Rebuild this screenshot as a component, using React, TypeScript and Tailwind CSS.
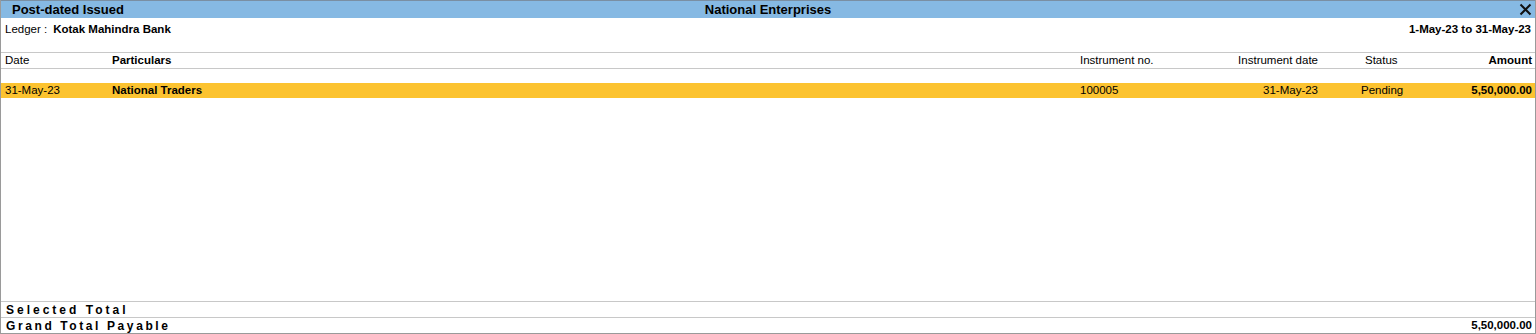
import React from "react";

export default function App() {
  return (
    <div
      className="w-[1536px] h-[334px] bg-white flex flex-col border-l border-r border-b border-[#9a9a9a] text-[11.5px] text-black overflow-hidden"
      style={{ fontFamily: '"Liberation Sans", Arial, sans-serif' }}
    >
      {/* Title bar */}
      <div className="h-[18px] bg-[#86b9e3] border-t border-[#7a8fa3] flex items-center relative shrink-0">
        <div className="pl-[11px] font-bold text-[13px] leading-none w-[300px]">Post-dated Issued</div>
        <div className="flex-1 text-center font-bold text-[13px] leading-none">National Enterprises</div>
        <div className="w-[300px] flex justify-end pr-[3px]">
          <svg width="13" height="13" viewBox="0 0 13 13">
            <path d="M1.5 1.5 L11.5 11.5 M11.5 1.5 L1.5 11.5" stroke="#111" strokeWidth="2" />
          </svg>
        </div>
      </div>
      {/* Ledger row */}
      <div className="h-[26px] flex items-center justify-between px-[4px] shrink-0 pb-[2px]">
        <div className="flex items-center">
          <span>Ledger :</span>
          <span className="font-bold ml-[6px]">Kotak Mahindra Bank</span>
        </div>
        <span className="font-bold">1-May-23 to 31-May-23</span>
      </div>
      <div className="h-[8px] shrink-0" />
      {/* Header */}
      <div className="h-[17px] border-t border-b border-[#c8c8c8] flex items-center shrink-0">
        <div className="w-[111px] pl-[4px]">Date</div>
        <div className="flex-1 font-bold">Particulars</div>
        <div className="w-[130px]">Instrument no.</div>
        <div className="w-[108px] text-right">Instrument date</div>
        <div className="w-[88px] pl-[47px]">Status</div>
        <div className="w-[129px] text-right pr-[3px] font-bold">Amount</div>
      </div>
      <div className="h-[14px] shrink-0" />
      {/* Selected row */}
      <div className="h-[15px] bg-[#fcc330] flex items-center shrink-0">
        <div className="w-[111px] pl-[4px]">31-May-23</div>
        <div className="flex-1 font-bold">National Traders</div>
        <div className="w-[130px]">100005</div>
        <div className="w-[108px] text-right">31-May-23</div>
        <div className="w-[88px] pl-[43px]">Pending</div>
        <div className="w-[129px] text-right pr-[3px] font-bold">5,50,000.00</div>
      </div>
      <div className="flex-1" />
      {/* Totals */}
      <div className="h-[16px] border-t border-[#c8c8c8] flex items-center shrink-0 text-[12px]">
        <div className="pl-[5px] font-bold tracking-[3px]">Selected Total</div>
      </div>
      <div className="h-[16px] border-t border-[#c8c8c8] flex items-center justify-between shrink-0 text-[12px]">
        <div className="pl-[5px] font-bold tracking-[2.6px]">Grand Total Payable</div>
        <div className="pr-[3px] font-bold text-[11.5px]">5,50,000.00</div>
      </div>
    </div>
  );
}
